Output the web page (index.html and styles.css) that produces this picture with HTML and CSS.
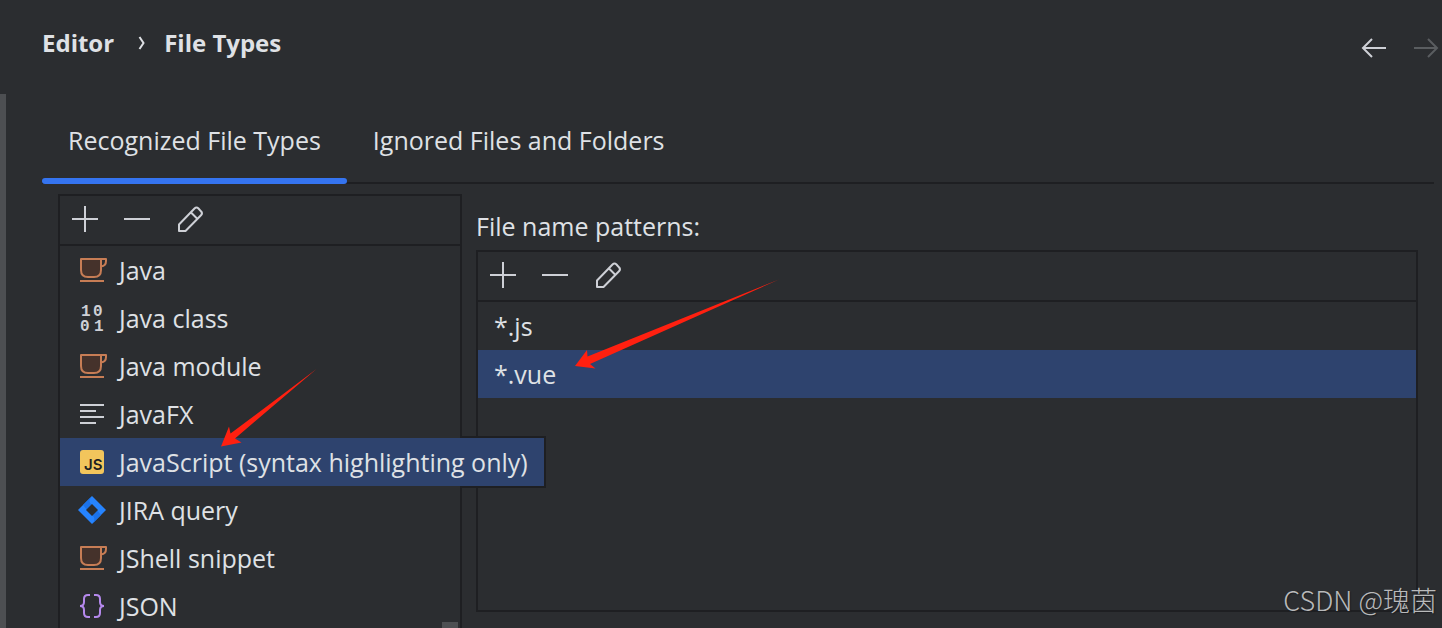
FILE: index.html
```html
<!DOCTYPE html>
<html lang="en">
<head>
    <meta charset="UTF-8">
    <meta name="viewport" content="width=device-width, initial-scale=1.0">
    <title>Editor - File Types</title>
    <link rel="stylesheet" href="styles.css">
</head>
<body>
    <!-- shared icons -->
    <svg class="icon-defs" aria-hidden="true">
        <symbol id="add" viewBox="0 0 32 32">
            <path d="M16 3v26M3 16h26" stroke="#ced0d6" stroke-width="2" fill="none"/>
        </symbol>
        <symbol id="remove" viewBox="0 0 32 32">
            <path d="M3 16h26" stroke="#ced0d6" stroke-width="2" fill="none"/>
        </symbol>
        <symbol id="edit" viewBox="0 0 32 32">
            <path d="M6 28v-6.500L21.500 5.500q2-2 4 0l2.500 2.800q2 2 0 4L12.500 28zM18 9.500l6.500 6.500" stroke="#ced0d6" stroke-width="2" fill="none" stroke-linejoin="round"/>
        </symbol>
        <symbol id="cup" viewBox="0 0 32 32">
            <path d="M5 5h20v11q0 7-7 7h-6q-7 0-7-7z" fill="#45322b" stroke="#c77d55" stroke-width="2" stroke-linejoin="round"/>
            <path d="M25 5h5v2q0 5-5 5.500M4 27h24" fill="none" stroke="#c77d55" stroke-width="2" stroke-linejoin="round"/>
        </symbol>
    </svg>

    <div class="page">
        <header class="header">
            <nav class="breadcrumb">
                <a href="#">Editor</a>
                <svg width="8" height="14" viewBox="0 0 8 14" aria-hidden="true"><path d="M2.500 1l4 6-4 6" fill="none" stroke="#dfe1e5" stroke-width="2"/></svg>
                <a href="#">File Types</a>
            </nav>
            <div class="history">
                <button type="button" aria-label="Back">
                    <svg width="26" height="20" viewBox="0 0 26 20"><path d="M25 10H2M11 1l-9 9 9 9" fill="none" stroke="#ced0d6" stroke-width="2"/></svg>
                </button>
                <button type="button" aria-label="Forward" disabled>
                    <svg width="26" height="20" viewBox="0 0 26 20"><path d="M1 10h23M15 1l9 9-9 9" fill="none" stroke="#5a5d60" stroke-width="2"/></svg>
                </button>
            </div>
        </header>

        <div class="body">
            <div class="side-bar"></div>
            <main class="main">
                <div class="tabs" role="tablist">
                    <button type="button" class="tab active" role="tab" aria-selected="true">Recognized File Types</button>
                    <button type="button" class="tab" role="tab" aria-selected="false">Ignored Files and Folders</button>
                </div>

                <div class="columns">
                    <section class="panel types">
                        <div class="toolbar">
                            <button type="button" aria-label="Add"><svg><use href="#add"/></svg></button>
                            <button type="button" aria-label="Remove"><svg><use href="#remove"/></svg></button>
                            <button type="button" aria-label="Edit"><svg><use href="#edit"/></svg></button>
                        </div>
                        <ul class="list" role="listbox" aria-label="File types">
                            <li role="option"><svg><use href="#cup"/></svg>Java</li>
                            <li role="option">
                                <svg viewBox="0 0 32 32" class="binary"><text x="5 17" y="14">10</text><text x="4 18" y="29">01</text></svg>Java class
                            </li>
                            <li role="option"><svg><use href="#cup"/></svg>Java module</li>
                            <li role="option">
                                <svg viewBox="0 0 32 32"><path d="M4 7h24M4 13h16M4 19h24M4 25h16" stroke="#ced0d6" stroke-width="2"/></svg>JavaFX
                            </li>
                            <li role="option" class="selected" aria-selected="true">
                                <svg viewBox="0 0 32 32" class="js"><rect x="4" y="4" width="24" height="24" rx="3" fill="#f2c55c"/><text x="8" y="24">JS</text></svg>JavaScript (syntax highlighting only)
                            </li>
                            <li role="option">
                                <svg viewBox="0 0 32 32">
                                    <path d="M16 2l14 14-14 14L2 16z" fill="#2684ff"/>
                                    <path d="M16 2q-5 5 0 9l-5 5-4-5z" fill="#1b72ea"/>
                                    <path d="M16 30q5-5 0-9l5-5 4 5z" fill="#1b72ea"/>
                                    <path d="M16 10l6 6-6 6-6-6z" fill="#2b2d30"/>
                                </svg>JIRA query
                            </li>
                            <li role="option"><svg><use href="#cup"/></svg>JShell snippet</li>
                            <li role="option">
                                <svg viewBox="0 0 32 32"><path d="M14 5h-2q-4 0-4 4v3q0 4-4 4 4 0 4 4v3q0 4 4 4h2M18 5h2q4 0 4 4v3q0 4 4 4-4 0-4 4v3q0 4-4 4h-2" fill="none" stroke="#b589ec" stroke-width="2"/></svg>JSON
                            </li>
                        </ul>
                        <div class="scroll-thumb"></div>
                    </section>

                    <section class="patterns">
                        <h2 id="patternsLabel">File name patterns:</h2>
                        <div class="panel">
                            <div class="toolbar">
                                <button type="button" aria-label="Add pattern"><svg><use href="#add"/></svg></button>
                                <button type="button" aria-label="Remove pattern"><svg><use href="#remove"/></svg></button>
                                <button type="button" aria-label="Edit pattern"><svg><use href="#edit"/></svg></button>
                            </div>
                            <ul class="list" role="listbox" aria-labelledby="patternsLabel">
                                <li role="option">*.js</li>
                                <li role="option" class="selected" aria-selected="true">*.vue</li>
                            </ul>
                        </div>
                    </section>
                </div>
            </main>
        </div>

        <!-- red pointers over the two selected rows -->
        <svg class="pointers" width="800" height="460" viewBox="0 0 800 460" aria-hidden="true">
            <path d="M316.500 369L235 438.500l6.500 4L221 446.500 229 426.500l1.500 7z" fill="#ff2010"/>
            <path d="M779 279.500L590 364l5.500 4.500L575 366 587 350l.5 6.500z" fill="#ff2010"/>
        </svg>
        <div class="watermark">CSDN @瑰茵</div>
    </div>
</body>
</html>
```
FILE: styles.css
```css
* {
    box-sizing: border-box;
}

body {
    margin: 0;
    background-color: #2b2d30;
    color: #dfe1e5;
    font-family: "Open Sans", "Noto Sans", sans-serif;
    font-size: 25px;
    line-height: 34px;
}

button {
    padding: 0;
    border: none;
    background: none;
    color: inherit;
    font: inherit;
    cursor: pointer;
}

svg {
    display: block;
    flex: none;
}

.icon-defs {
    position: absolute;
    width: 0;
    height: 0;
}

.page {
    position: relative;
    display: flex;
    flex-direction: column;
    height: 100vh;
    overflow: hidden;
}

/* header */
.header {
    display: flex;
    justify-content: space-between;
    height: 94px;
    flex: none;
    padding: 26px 3px 0 42px;
}

.breadcrumb {
    display: flex;
    align-items: center;
    gap: 21px;
    height: 34px;
    font-weight: bold;
    font-size: 24px;
}

.breadcrumb svg {
    margin-left: 2px;
    margin-right: -2px;
}

.breadcrumb a {
    color: inherit;
    text-decoration: none;
}

.history {
    display: flex;
    align-items: center;
    gap: 26px;
    height: 44px;
}

/* body */
.body {
    display: flex;
    flex: 1;
    min-height: 0;
}

.side-bar {
    width: 6px;
    background-color: #4d4f52;
}

.main {
    display: flex;
    flex-direction: column;
    flex: 1;
    min-width: 0;
    padding: 0 8px 0 36px;
}

.tabs {
    display: flex;
    flex: none;
    height: 90px;
    border-bottom: 2px solid #1e1f22;
}

.tab {
    position: relative;
    padding: 4px 26px 0;
}

.tab.active::after {
    content: "";
    position: absolute;
    left: 0;
    right: 0;
    bottom: -2px;
    height: 6px;
    border-radius: 3px;
    background-color: #3574f0;
}

.columns {
    display: flex;
    flex: 1;
    gap: 14px;
    min-height: 0;
    padding: 10px 16px 0;
}

.panel {
    border: 2px solid #1e1f22;
}

.toolbar {
    display: flex;
    align-items: center;
    gap: 20px;
    height: 50px;
    padding: 0 9px 2px;
    border-bottom: 2px solid #1e1f22;
}

.toolbar svg {
    width: 32px;
    height: 32px;
}

.list {
    margin: 0;
    padding: 0;
    list-style: none;
}

.list li {
    display: flex;
    align-items: center;
    height: 48px;
    padding: 0 16px;
    white-space: nowrap;
}

.list svg {
    width: 32px;
    height: 32px;
    margin-right: 11px;
}

.list .selected {
    background-color: #2e436e;
}

.types {
    position: relative;
    z-index: 1;
    flex: none;
    width: 404px;
    border-bottom: none;
}

/* the long row grows past the panel edge, outlined only out there */
.types .selected {
    position: relative;
    width: max-content;
}

.types .selected::after {
    content: "";
    position: absolute;
    top: -2px;
    right: -2px;
    bottom: -2px;
    left: 400px;
    border: 2px solid #1e1f22;
    border-left: none;
}

.binary text {
    fill: #ced0d6;
    font: bold 16px "Liberation Mono", monospace;
}

.js text {
    fill: #1e1f22;
    font: 600 15px "Inter", sans-serif;
}

.scroll-thumb {
    position: absolute;
    right: 2px;
    bottom: 0;
    width: 16px;
    height: 6px;
    background-color: #4d4f52;
}

.patterns {
    display: flex;
    flex-direction: column;
    flex: 1;
    min-width: 0;
    padding-bottom: 16px;
}

.patterns h2 {
    margin: 0;
    padding: 15px 0 7px;
    font-size: inherit;
    font-weight: normal;
}

.patterns .panel {
    flex: 1;
}

.pointers {
    position: absolute;
    z-index: 2;
    top: 0;
    left: 0;
    pointer-events: none;
}

.watermark {
    position: absolute;
    z-index: 2;
    right: 5px;
    bottom: 11px;
    color: #b9babb;
    font-family: "Noto Sans CJK SC", sans-serif;
    font-size: 27px;
    font-weight: 300;
    text-shadow: 1px 1px 1px #1e1f22;
}
```
